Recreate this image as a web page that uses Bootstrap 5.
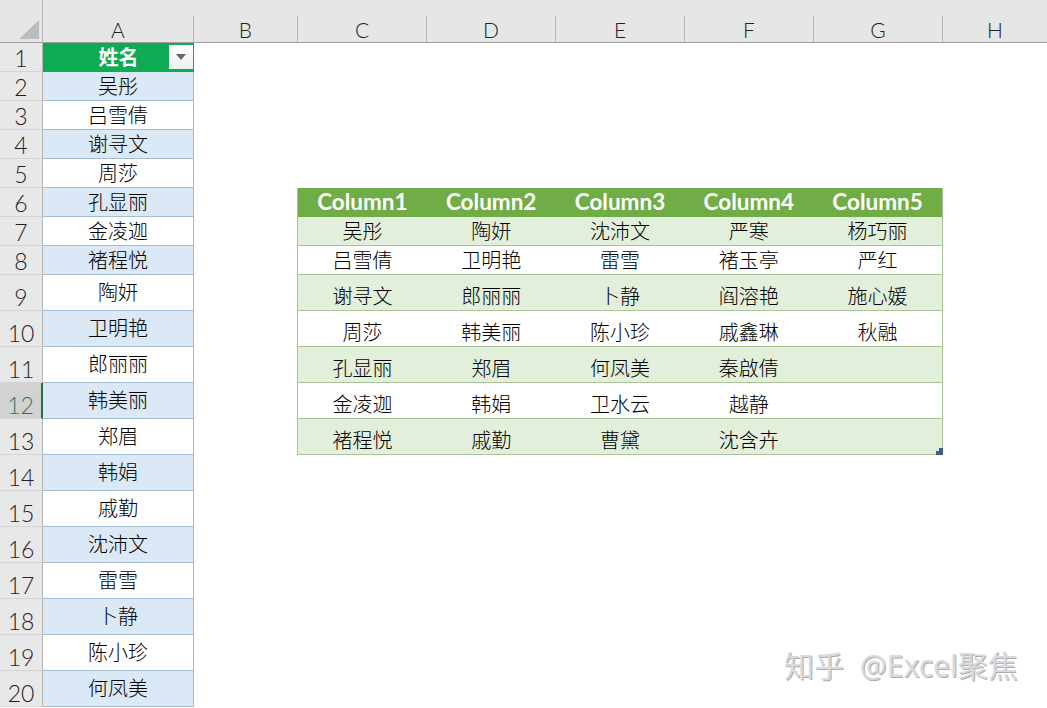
<!DOCTYPE html>
<html lang="zh"><head><meta charset="utf-8"><title>Sheet</title>
<link href="https://cdn.jsdelivr.net/npm/bootstrap@5.3.0/dist/css/bootstrap.min.css" rel="stylesheet">
<style>
html,body{margin:0;background:#fff;overflow:hidden}
body{width:1047px;height:708px;font-family:"Noto Sans CJK SC",sans-serif;color:#000}
.sheet-wrap{width:1047px;height:708px;overflow:hidden}
.col-bar{height:43px;background:#e6e6e6;border-bottom:1px solid #9f9f9f}
.col-cell{height:26px;border-right:1px solid #b5b5b5;font:300 21px/28px "Lato",sans-serif;color:#222;text-align:center}
.corner{width:43px;height:42px;flex:none;position:relative;border-right:1px solid #b5b5b5}
.corner svg{position:absolute;left:19px;top:20px}
.w-a{width:151px;flex:none}.w-b{width:104px;flex:none}.w-m{width:129px;flex:none}.w-h{width:104px;flex:none;border-right:0}
.row-heads{width:43px;flex:none}
.rh{background:#e8e8e8;border-bottom:1px solid #d4d4d4;border-right:1px solid #b5b5b5;font:300 23px/30px "Lato",sans-serif;color:#222;text-align:center;height:29px}
.rh.tall{height:36px;padding-top:6px;line-height:32px}
.rh.sel{background:#d2d2d2;color:#37735a;border-right:2px solid #217346}
.col-a{width:151px;flex:none}
.ca{height:29px;border-bottom:1px solid #a3bcd4;border-right:1px solid #a3bcd4;text-align:center;font-size:20px;line-height:28px;font-weight:300;background:#fff}
.ca.tall{height:36px;line-height:34px}
.ca.alt{background:#dbe9f6}
.ca.hd{background:#0dab54;color:#fff;font-weight:700;position:relative;border:0;line-height:27px}
.filter-btn{position:absolute;right:1px;top:2px;width:24px;height:24px;background:linear-gradient(#fff,#eef0f0);display:flex;align-items:center;justify-content:center}
.canvas{padding:145px 0 0 103px;flex:none}
.inner{width:646px;table-layout:fixed;border-collapse:separate;border-spacing:0;border-left:1px solid #a9c496;border-right:1px solid #a9c496}
.inner th,.inner td{width:20%;text-align:center;padding:0;vertical-align:top;font-size:20px;font-weight:300;height:29px;line-height:27px;border-bottom:1px solid #a9c496}
.inner th{background:#70ad47;color:#fff;font:700 22.5px/28px "Lato",sans-serif;border-bottom:0}
.inner tr.alt td{background:#e2efda}
.inner tr.tall td{height:36px;padding-top:7px;line-height:28px}
.handle-wrap{position:relative;width:646px}
.handle{position:absolute;right:0;bottom:0;width:7px;height:7px}
.wm{position:absolute;left:784px;top:646px;font-size:30px;line-height:36px;color:#dadada;font-weight:400;text-shadow:1px 1px 0 #adadad;white-space:nowrap}
.wm-lat{font-family:"Noto Sans",sans-serif;font-size:30px;margin-left:9px}
</style></head><body>
<div class="sheet-wrap position-relative">
 <div class="col-bar d-flex align-items-end">
  <div class="corner"><svg width="20" height="20" viewBox="0 0 20 20"><polygon points="20,0 20,19 0,19" fill="#bdbdbd"/></svg></div>
  <div class="col-cell w-a">A</div><div class="col-cell w-b">B</div><div class="col-cell w-m">C</div><div class="col-cell w-m">D</div><div class="col-cell w-m">E</div><div class="col-cell w-m">F</div><div class="col-cell w-m">G</div><div class="col-cell w-h">H</div>
 </div>
 <div class="d-flex">
  <div class="row-heads">
   <div class="rh">1</div><div class="rh">2</div><div class="rh">3</div><div class="rh">4</div><div class="rh">5</div><div class="rh">6</div><div class="rh">7</div><div class="rh">8</div>
   <div class="rh tall">9</div><div class="rh tall">10</div><div class="rh tall">11</div><div class="rh tall sel">12</div><div class="rh tall">13</div><div class="rh tall">14</div><div class="rh tall">15</div><div class="rh tall">16</div><div class="rh tall">17</div><div class="rh tall">18</div><div class="rh tall">19</div><div class="rh tall">20</div>
  </div>
  <div class="col-a">
   <div class="ca hd">姓名<span class="filter-btn"><svg width="10" height="6" viewBox="0 0 10 6"><polygon points="0,0 10,0 5,6" fill="#666"/></svg></span></div>
   <div class="ca alt">吴彤</div><div class="ca">吕雪倩</div><div class="ca alt">谢寻文</div><div class="ca">周莎</div><div class="ca alt">孔显丽</div><div class="ca">金凌迦</div><div class="ca alt">褚程悦</div>
   <div class="ca tall">陶妍</div><div class="ca tall alt">卫明艳</div><div class="ca tall">郎丽丽</div><div class="ca tall alt">韩美丽</div><div class="ca tall">郑眉</div><div class="ca tall alt">韩娟</div><div class="ca tall">戚勤</div><div class="ca tall alt">沈沛文</div><div class="ca tall">雷雪</div><div class="ca tall alt">卜静</div><div class="ca tall">陈小珍</div><div class="ca tall alt">何凤美</div>
  </div>
  <div class="canvas">
   <div class="handle-wrap">
   <table class="inner">
    <tr><th>Column1</th><th>Column2</th><th>Column3</th><th>Column4</th><th>Column5</th></tr>
    <tr class="alt"><td>吴彤</td><td>陶妍</td><td>沈沛文</td><td>严寒</td><td>杨巧丽</td></tr>
    <tr><td>吕雪倩</td><td>卫明艳</td><td>雷雪</td><td>褚玉亭</td><td>严红</td></tr>
    <tr class="alt tall"><td>谢寻文</td><td>郎丽丽</td><td>卜静</td><td>阎溶艳</td><td>施心媛</td></tr>
    <tr class="tall"><td>周莎</td><td>韩美丽</td><td>陈小珍</td><td>戚鑫琳</td><td>秋融</td></tr>
    <tr class="alt tall"><td>孔显丽</td><td>郑眉</td><td>何凤美</td><td>秦啟倩</td><td></td></tr>
    <tr class="tall"><td>金凌迦</td><td>韩娟</td><td>卫水云</td><td>越静</td><td></td></tr>
    <tr class="alt tall"><td>褚程悦</td><td>戚勤</td><td>曹黛</td><td>沈含卉</td><td></td></tr>
   </table>
   <svg class="handle" viewBox="0 0 7 7"><polygon points="7,0 7,7 0,7 0,3 3,3 3,0" fill="#44598f"/></svg>
   </div>
  </div>
 </div>
 <div class="wm">知乎 <span class="wm-lat">@Excel</span>聚焦</div>
</div>
<script src="https://cdn.jsdelivr.net/npm/bootstrap@5.3.0/dist/js/bootstrap.bundle.min.js"></script>
</body></html>
